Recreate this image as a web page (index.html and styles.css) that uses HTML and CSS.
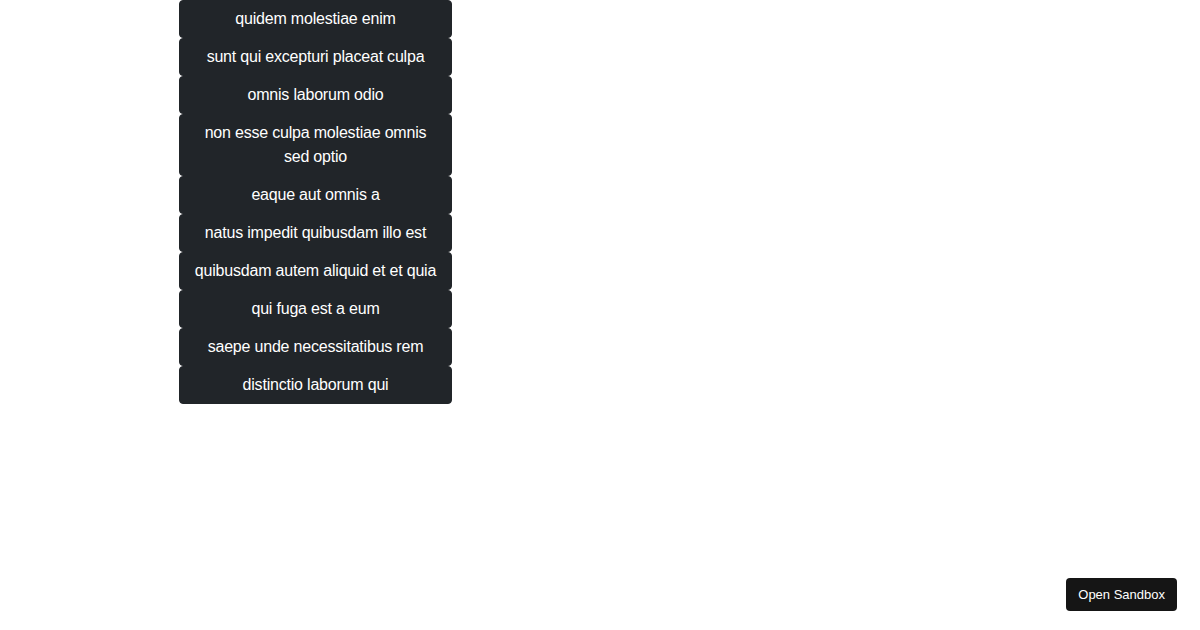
FILE: index.html
```html
<!DOCTYPE html>
<html lang="en">
<head>
    <meta charset="UTF-8">
    <title>Posts</title>
    <link rel="stylesheet" href="styles.css">
</head>
<body>
    <div class="list">
        <button class="btn">quidem molestiae enim</button>
        <button class="btn">sunt qui excepturi placeat culpa</button>
        <button class="btn">omnis laborum odio</button>
        <button class="btn">non esse culpa molestiae omnis sed optio</button>
        <button class="btn">eaque aut omnis a</button>
        <button class="btn">natus impedit quibusdam illo est</button>
        <button class="btn">quibusdam autem aliquid et et quia</button>
        <button class="btn">qui fuga est a eum</button>
        <button class="btn">saepe unde necessitatibus rem</button>
        <button class="btn">distinctio laborum qui</button>
    </div>

    <a href="#" class="sandbox-link">Open Sandbox</a>
</body>
</html>
```

FILE: styles.css
```css
body {
    margin: 0;
    font-family: "Liberation Sans", Arial, sans-serif;
    background-color: #ffffff;
}

.list {
    display: flex;
    flex-direction: column;
    width: 273px;
    margin-left: 179px;
}

.btn {
    display: block;
    width: 100%;
    padding: 6px 12px;
    font-family: inherit;
    font-size: 16px;
    line-height: 24px;
    letter-spacing: -0.2px;
    color: #ffffff;
    background-color: #212529;
    border: 1px solid #212529;
    border-radius: 4px;
    text-align: center;
    cursor: pointer;
}

.sandbox-link {
    position: fixed;
    right: 23px;
    bottom: 19px;
    padding: 9px 12px;
    font-size: 13px;
    line-height: 15px;
    color: #ffffff;
    background-color: #151515;
    border-radius: 4px;
    text-decoration: none;
}
```
